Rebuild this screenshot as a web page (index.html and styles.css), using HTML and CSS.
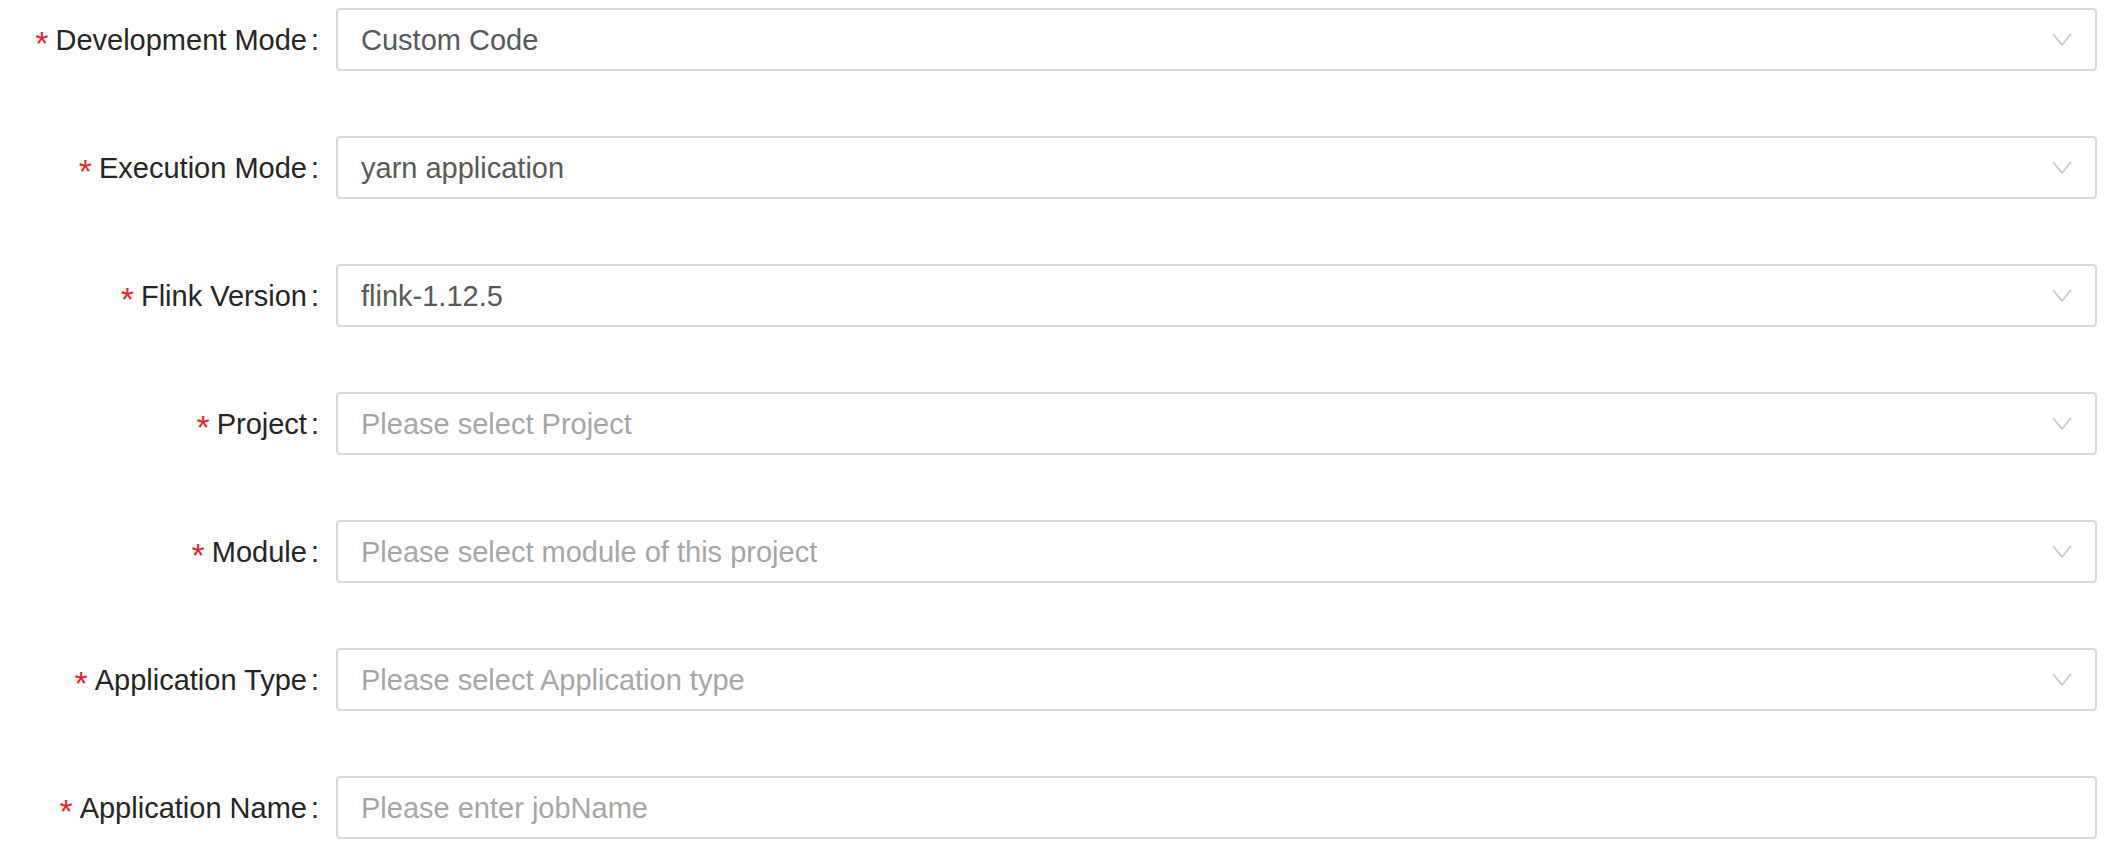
FILE: index.html
```html
<!DOCTYPE html>
<html lang="en">
<head>
<meta charset="utf-8">
<title>Application Form</title>
<link rel="stylesheet" href="styles.css">
</head>
<body>
<form class="form">
  <div class="row">
    <label class="label"><span class="req">*</span>Development Mode<span class="colon">:</span></label>
    <div class="control select"><span class="value">Custom Code</span><svg class="arrow" width="20" height="13" viewBox="0 0 20 13"><polyline points="1,1 10,12 19,1" fill="none" stroke="#c4c4c4" stroke-width="1.6"/></svg></div>
  </div>
  <div class="row">
    <label class="label"><span class="req">*</span>Execution Mode<span class="colon">:</span></label>
    <div class="control select"><span class="value">yarn application</span><svg class="arrow" width="20" height="13" viewBox="0 0 20 13"><polyline points="1,1 10,12 19,1" fill="none" stroke="#c4c4c4" stroke-width="1.6"/></svg></div>
  </div>
  <div class="row">
    <label class="label"><span class="req">*</span>Flink Version<span class="colon">:</span></label>
    <div class="control select"><span class="value">flink-1.12.5</span><svg class="arrow" width="20" height="13" viewBox="0 0 20 13"><polyline points="1,1 10,12 19,1" fill="none" stroke="#c4c4c4" stroke-width="1.6"/></svg></div>
  </div>
  <div class="row">
    <label class="label"><span class="req">*</span>Project<span class="colon">:</span></label>
    <div class="control select"><span class="placeholder">Please select Project</span><svg class="arrow" width="20" height="13" viewBox="0 0 20 13"><polyline points="1,1 10,12 19,1" fill="none" stroke="#c4c4c4" stroke-width="1.6"/></svg></div>
  </div>
  <div class="row">
    <label class="label"><span class="req">*</span>Module<span class="colon">:</span></label>
    <div class="control select"><span class="placeholder">Please select module of this project</span><svg class="arrow" width="20" height="13" viewBox="0 0 20 13"><polyline points="1,1 10,12 19,1" fill="none" stroke="#c4c4c4" stroke-width="1.6"/></svg></div>
  </div>
  <div class="row">
    <label class="label"><span class="req">*</span>Application Type<span class="colon">:</span></label>
    <div class="control select"><span class="placeholder">Please select Application type</span><svg class="arrow" width="20" height="13" viewBox="0 0 20 13"><polyline points="1,1 10,12 19,1" fill="none" stroke="#c4c4c4" stroke-width="1.6"/></svg></div>
  </div>
  <div class="row">
    <label class="label"><span class="req">*</span>Application Name<span class="colon">:</span></label>
    <input class="control input" type="text" placeholder="Please enter jobName">
  </div>
</form>
</body>
</html>
```
FILE: styles.css
```css
html, body {
  margin: 0;
  padding: 0;
  background: #ffffff;
}

body {
  font-family: "Liberation Sans", Arial, sans-serif;
  font-size: 29px;
  color: #262626;
}

.form {
  display: flex;
  flex-direction: column;
  gap: 65px;
  padding: 8px 19px 0 0;
}

.row {
  display: flex;
  align-items: center;
  height: 63px;
}

.label {
  width: 336px;
  flex: none;
  display: flex;
  justify-content: flex-end;
  align-items: center;
  padding: 2px 17px 0 0;
  box-sizing: border-box;
  color: #262626;
  white-space: nowrap;
}

.req {
  color: #f5222d;
  font-size: 34px;
  line-height: 1;
  margin-right: 7px;
  position: relative;
  top: 2px;
}

.colon {
  margin-left: 4px;
}

.control {
  flex: 1;
  height: 63px;
  box-sizing: border-box;
  border: 2px solid #d9d9d9;
  border-radius: 4px;
  background: #fff;
  font-family: inherit;
  font-size: 29px;
}

.select {
  display: flex;
  align-items: center;
  justify-content: space-between;
  padding: 2px 23px 0 23px;
}

.arrow {
  flex: none;
  display: block;
  margin-top: -2px;
}

.value {
  color: #595959;
}

.placeholder {
  color: #a6a6a6;
}

.input {
  padding: 2px 23px 0 23px;
  color: #595959;
  outline: none;
}

.input::placeholder {
  color: #a6a6a6;
  opacity: 1;
}
```
